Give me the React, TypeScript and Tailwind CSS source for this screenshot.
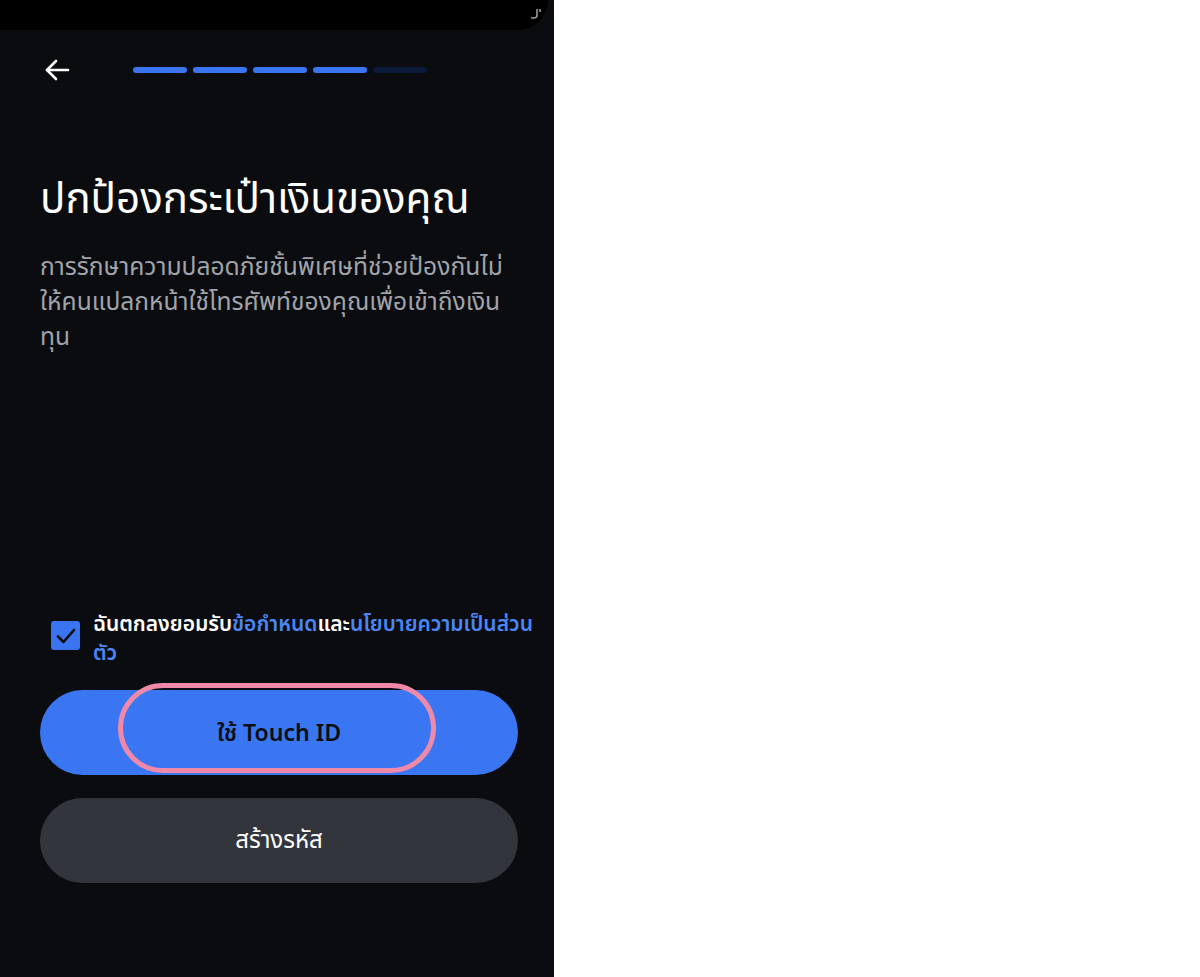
import React from 'react';

const thai = { fontFamily: '"Noto Sans Thai", "Noto Sans", "Liberation Sans", sans-serif' };

function BackArrow() {
  return (
    <svg width="26" height="22" viewBox="0 0 26 22" fill="none" stroke="white" strokeWidth="2.6" strokeLinecap="round" strokeLinejoin="round">
      <path d="M24 11H3" />
      <path d="M12 2L3 11l9 9" />
    </svg>
  );
}

function Progress() {
  const steps = [true, true, true, true, false];
  return (
    <div className="flex gap-[6px]">
      {steps.map((on, i) => (
        <div key={i} className={on ? 'w-[54px] h-[6px] rounded-full bg-[#3b74f0]' : 'w-[54px] h-[6px] rounded-full bg-[#0c1a3a]'} />
      ))}
    </div>
  );
}

export default function App() {
  return (
    <main className="w-[1200px] h-[977px] bg-white flex" style={thai}>
      <div className="w-[554px] h-[977px] bg-[#0b0c0f] flex flex-col relative overflow-hidden">
        {/* status bar strip */}
        <div className="h-[30px] w-[548px] bg-black rounded-br-[30px] flex justify-end pr-[6px] pt-[8px]">
          <svg width="12" height="14" viewBox="0 0 12 14" fill="none" stroke="#9a9a9a" strokeWidth="1.6">
            <path d="M7 1v6c0 2-1 3-3 3H1" />
            <path d="M10 1v3" />
          </svg>
        </div>

        {/* header */}
        <div className="h-[40px] mt-[20px] flex items-center">
          <div className="w-[133px] pl-[44px] flex items-center">
            <BackArrow />
          </div>
          <Progress />
        </div>

        {/* title + description */}
        <div className="px-[40px] mt-[84px]">
          <h1 className="text-white text-[42px] leading-[52px] font-normal whitespace-nowrap">ปกป้องกระเป๋าเงินของคุณ</h1>
          <p className="mt-[24px] text-[#a0a3aa] text-[24.6px] leading-[35px] whitespace-nowrap">
            <span className="block">การรักษาความปลอดภัยชั้นพิเศษที่ช่วยป้องกันไม่</span>
            <span className="block">ให้คนแปลกหน้าใช้โทรศัพท์ของคุณเพื่อเข้าถึงเงิน</span>
            <span className="block">ทุน</span>
          </p>
        </div>

        <div className="flex-1" />

        {/* agreement */}
        <div className="flex items-start pl-[51px] pr-[10px]">
          <div className="w-[29px] h-[29px] mt-[11px] rounded-[3px] bg-[#3b74f0] flex items-center justify-center shrink-0">
            <svg width="20" height="16" viewBox="0 0 20 16" fill="none" stroke="#0b0c0f" strokeWidth="2.6" strokeLinecap="round" strokeLinejoin="round">
              <path d="M2 8.5l5.5 5.5L18 2" />
            </svg>
          </div>
          <p className="ml-[13px] text-[21px] leading-[29px] font-semibold text-white whitespace-nowrap">
            <span className="block">
              ฉันตกลงยอมรับ<span className="text-[#4a86f5]">ข้อกำหนด</span>และ<span className="text-[#4a86f5]">นโยบายความเป็นส่วน</span>
            </span>
            <span className="block text-[#4a86f5]">ตัว</span>
          </p>
        </div>

        {/* buttons */}
        <div className="pl-[40px] pr-[36px] mt-[22px] flex flex-col gap-[23px] mb-[94px]">
          <div className="relative">
            <button className="w-full h-[85px] rounded-full bg-[#3a75f2] text-[#0d0e12] text-[23px] font-semibold pt-[3px]">
              ใช้ Touch ID
            </button>
            <div className="absolute left-[78px] top-[-7px] w-[318px] h-[90px] rounded-full border-[5px] border-[#ef89aa] pointer-events-none" />
          </div>
          <button className="w-full h-[85px] rounded-full bg-[#33353d] text-white text-[24px]">
            สร้างรหัส
          </button>
        </div>
      </div>
    </main>
  );
}
